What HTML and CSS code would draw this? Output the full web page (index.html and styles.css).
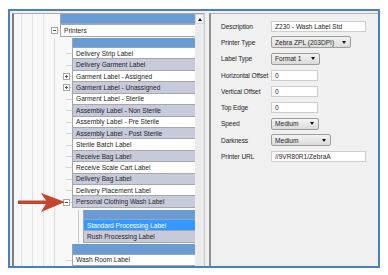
FILE: index.html
```html
<!DOCTYPE html>
<html>
	<head>
		<meta charset="UTF-8">
		<title>Printers</title>
		<link rel="stylesheet" href="styles.css">
	</head>
	<body>
		<div class="frame">
			<div class="tree">
				<div class="treeBody">
					<div class="lvl0">
						<div class="hdr"></div>
						<div class="row big"><span class="exp minus"></span><span class="cell">Printers</span></div>
						<div class="sub">
							<div class="hdr"></div>
							<div class="row"><span class="exp"></span><span class="cell">Delivery Strip Label</span></div>
							<div class="row"><span class="exp"></span><span class="cell alt">Delivery Garment Label</span></div>
							<div class="row"><span class="exp plus"></span><span class="cell">Garment Label - Assigned</span></div>
							<div class="row"><span class="exp plus"></span><span class="cell alt">Garment Label - Unassigned</span></div>
							<div class="row"><span class="exp"></span><span class="cell">Garment Label - Sterile</span></div>
							<div class="row"><span class="exp"></span><span class="cell alt">Assembly Label - Non Sterile</span></div>
							<div class="row"><span class="exp"></span><span class="cell">Assembly Label - Pre Sterile</span></div>
							<div class="row"><span class="exp"></span><span class="cell alt">Assembly Label - Post Sterile</span></div>
							<div class="row"><span class="exp"></span><span class="cell">Sterile Batch Label</span></div>
							<div class="row"><span class="exp"></span><span class="cell alt">Receive Bag Label</span></div>
							<div class="row"><span class="exp"></span><span class="cell">Receive Scale Cart Label</span></div>
							<div class="row"><span class="exp"></span><span class="cell alt">Delivery Bag Label</span></div>
							<div class="row"><span class="exp"></span><span class="cell">Delivery Placement Label</span></div>
							<div class="row"><span class="exp minus"></span><span class="cell alt">Personal Clothing Wash Label</span></div>
							<div class="sub2">
								<div class="hdr"></div>
								<div class="cell sel">Standard Processing Label</div>
								<div class="cell alt">Rush Processing Label</div>
							</div>
							<div class="hdr tall"></div>
							<div class="row"><span class="exp"></span><span class="cell">Wash Room Label</span></div>
						</div>
					</div>
				</div>
				<div class="scroll">
					<div class="up"></div>
				</div>
				<svg class="arrow" width="50" height="22" viewBox="0 0 50 22">
					<rect x="0" y="8.5" width="30" height="3.5" fill="#c1482c"/>
					<polygon points="23,1 47,10 23,20 29,10" fill="#c1482c"/>
				</svg>
			</div>

			<div class="panel">
				<div class="form">
					<span class="lbl">Description</span>
					<div class="box wide">Z230 - Wash Label Std</div>

					<span class="lbl">Printer Type</span>
					<div class="combo w80">Zebra ZPL (203DPI)</div>

					<span class="lbl">Label Type</span>
					<div class="combo w49">Format 1</div>

					<span class="lbl">Horizontal Offset</span>
					<div class="box w47">0</div>

					<span class="lbl">Vertical Offset</span>
					<div class="box w47">0</div>

					<span class="lbl">Top Edge</span>
					<div class="box w47">0</div>

					<span class="lbl">Speed</span>
					<div class="combo w48">Medium</div>

					<span class="lbl">Darkness</span>
					<div class="combo w60">Medium</div>

					<span class="lbl">Printer URL</span>
					<div class="box wide">//9VR80R1/ZebraA</div>
				</div>
			</div>
		</div>
	</body>
</html>
```

FILE: styles.css
```css
*{
	margin: 0;
	padding: 0;
	box-sizing: border-box;
}
body{
	background-color: #fff;
	font-family: "Liberation Sans", Arial, sans-serif;
	font-size: 6.6px;
	color: #1e1e1e;
}
.frame{
	width: 372px;
	height: 259px;
	margin: 9px 0 0 8px;
	border: 2px solid #4a7fc3;
	background-color: #f0f0f0;
	display: flex;
	overflow: hidden;
}

/* tree on the left */
.tree{
	width: 193px;
	margin: 2px 0 0 2px;
	display: flex;
	position: relative;
	border-left: 2px solid #7f7f7f;
	border-top: 1px solid #a9a9a9;
	border-right: 1px solid #c8c8c8;
}
.treeBody{
	flex: 1;
	overflow: hidden;
	background-color: #f8f8f8;
	background-image: linear-gradient(#e2e2e2, #e2e2e2), linear-gradient(#e2e2e2, #e2e2e2), linear-gradient(#e2e2e2, #e2e2e2);
	background-size: 1px 100%;
	background-position: 7px 0, 18px 0, 29px 0;
	background-repeat: no-repeat;
}
.lvl0{
	margin-left: 46px;
}
.hdr{
	height: 10px;
	background-color: #6a9bd3;
	border-left: 1px solid #9aa6b8;
	border-bottom: 1px solid #8ea6c6;
}
.hdr.tall{
	height: 11px;
	margin-top: 1px;
}
.row{
	display: flex;
	height: 11.43px;
	margin-left: -12px;
}
.row.big{
	height: 13px;
}
.exp{
	width: 12px;
	flex: none;
	display: flex;
	align-items: center;
	justify-content: center;
	background: linear-gradient(#d4d4d4, #d4d4d4) no-repeat 6px 50% / 6px 1px;
}
.exp.plus::before,
.exp.minus::before{
	content: "";
	width: 5px;
	height: 5px;
	border: 1px solid #a8a8a8;
	background: linear-gradient(#555, #555) no-repeat 50% 50% / 3px 1px, #fff;
}
.exp.plus::before{
	background: linear-gradient(#555, #555) no-repeat 50% 50% / 3px 1px, linear-gradient(#555, #555) no-repeat 50% 50% / 1px 3px, #fff;
}
.cell{
	flex: 1;
	height: 11.43px;
	display: flex;
	align-items: center;
	padding-left: 3px;
	background-color: #fff;
	border-left: 1px solid #a7a7a7;
	border-bottom: 1px solid #a7a7a7;
	white-space: nowrap;
}
.row.big .cell{
	height: 13px;
	border-top: 1px solid #a7a7a7;
}
.cell.alt{
	background-color: #c7cadb;
}
.cell.sel{
	background-color: #3399ff;
	color: #fff;
}
.sub{
	margin: 1px 0 0 -6px;
	padding-left: 17px;
	border-left: 1px solid #dadada;
}
.sub2{
	margin: 2px 0 0 6px;
	padding-left: 4px;
	border-left: 1px solid #c9c9c9;
}
.scroll{
	width: 9px;
	background-color: #ebebeb;
}
.up{
	height: 10px;
	border: 1px solid #d6d6d6;
	background-color: #f4f4f4;
	display: flex;
	align-items: center;
	justify-content: center;
}
.up::before{
	content: "";
	border-left: 2.5px solid transparent;
	border-right: 2.5px solid transparent;
	border-bottom: 3px solid #111;
}
.arrow{
	position: absolute;
	left: 4px;
	top: 178px;
}

/* settings on the right */
.panel{
	flex: 1;
	margin: 2px 0 0 4px;
	border-left: 2px solid #8e8e8e;
	border-top: 1px solid #b4b4b4;
	padding: 4px 0 0 10px;
}
.form{
	display: grid;
	grid-template-columns: 50px auto;
	grid-auto-rows: 16.3px;
	align-items: center;
	justify-items: start;
}
.lbl{
	white-space: nowrap;
	letter-spacing: -0.1px;
}
.box{
	height: 11px;
	border: 1px solid #cdcdcd;
	background-color: #fff;
	padding-left: 3px;
	display: flex;
	align-items: center;
}
.combo{
	height: 12px;
	border: 1px solid #9d9d9d;
	border-radius: 2px;
	background: linear-gradient(#f3f3f3, #dadada);
	padding-left: 3px;
	display: flex;
	align-items: center;
	white-space: nowrap;
}
.combo::after{
	content: "";
	margin: 0 4px 0 auto;
	border-left: 2.5px solid transparent;
	border-right: 2.5px solid transparent;
	border-top: 3px solid #111;
}
.wide{ width: 95px; }
.w80{ width: 80px; }
.w49{ width: 49px; }
.w47{ width: 47px; }
.w48{ width: 48px; }
.w60{ width: 60px; }
```
